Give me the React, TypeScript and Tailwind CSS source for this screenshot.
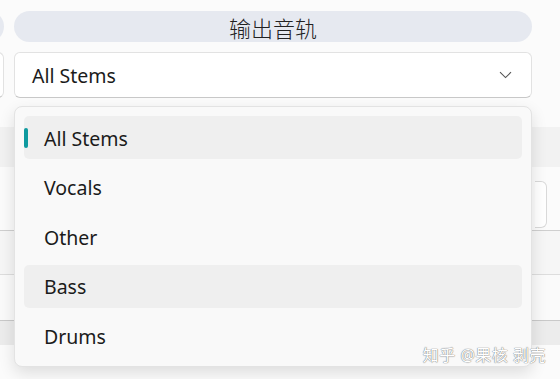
import { useState } from 'react';

const stems = ['All Stems', 'Vocals', 'Other', 'Bass', 'Drums'];

const font = { fontFamily: '"Noto Sans", "Noto Sans CJK SC", sans-serif' };

const App = () => {
    const [selected] = useState('All Stems');
    const hovered = 'Bass';

    return (
        <div className="relative w-[560px] h-[379px] overflow-hidden bg-[#fbfbfb] text-[#1b1b1b]" style={font}>
            {/* Top header row */}
            <div className="flex gap-[10px] ml-[-196px] pt-[11px]">
                <div className="w-[200px] h-[31px] rounded-full bg-[#e6e9f0]" />
                <div className="w-[518px] h-[31px] rounded-full bg-[#e6e9f0] flex items-center justify-center pt-[2px]">
                    <span className="text-[22px] font-light text-[#222] leading-none">输出音轨</span>
                </div>
            </div>

            {/* Select row */}
            <div className="flex gap-[10px] ml-[-196px] mt-[10px]">
                <div className="w-[200px] h-[46px] rounded-[6px] bg-white border border-[#e2e2e2] border-b-[#c8c8c8]" />
                <div className="w-[518px] h-[46px] rounded-[6px] bg-white border border-[#e2e2e2] border-b-[#c8c8c8] flex items-center justify-between pl-[17px] pr-[19px]">
                    <span className="text-[19.5px] pt-[2px]">{selected}</span>
                    <svg width="13" height="8" viewBox="0 0 13 8" fill="none">
                        <path d="M1 1.2 L6.5 6.6 L12 1.2" stroke="#555" strokeWidth="1.1" />
                    </svg>
                </div>
            </div>

            {/* Background content behind the popup */}
            <div className="flex flex-col mt-[29px]">
                <div className="h-[40px] bg-[#f2f2f2]" />
                <div className="h-[63px] bg-[#fbfbfb] flex items-center pl-[535px] pt-[12px]">
                    <div className="w-[12px] h-[47px] rounded-r-[6px] border border-l-0 border-[#d9d9d9] bg-white" />
                </div>
                <div className="h-px bg-[#cfcfcf]" />
                <div className="h-[43px] bg-[#f6f6f6]" />
                <div className="h-px bg-[#dddddd]" />
                <div className="h-[45px] bg-[#fafafa]" />
                <div className="h-px bg-[#c9c9c9]" />
                <div className="h-[24px] bg-[#ececec]" />
            </div>

            {/* Dropdown list */}
            <div className="absolute left-[14px] top-[106px] w-[518px] h-[261px] rounded-[8px] bg-[#f9f9f9] border border-[#e3e3e3] shadow-[0_6px_16px_rgba(0,0,0,0.12)] px-[9px] pt-[9px] flex flex-col gap-[6.5px]">
                {stems.map((s) => (
                    <div
                        key={s}
                        className={`relative h-[43px] rounded-[5px] flex items-center pl-[20px] pt-[2px] text-[19.5px] ${s === selected || s === hovered ? 'bg-[#efefef]' : ''}`}
                    >
                        {s === selected && (
                            <div className="absolute left-0 top-[12px] w-[4px] h-[20px] rounded-full bg-[#0f9a9f]" />
                        )}
                        {s}
                    </div>
                ))}
            </div>

            {/* Watermark */}
            <div className="absolute right-[14px] bottom-[12px] text-[16px] text-white tracking-[0.5px] [text-shadow:0_0_1px_#777,0_0_1px_#777]">
                知乎 @果核 剥壳
            </div>
        </div>
    );
};

export default App;
